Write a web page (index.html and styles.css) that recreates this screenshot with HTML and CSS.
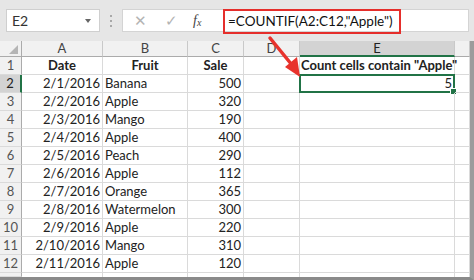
FILE: index.html
```html
<!DOCTYPE html>
<html lang="en">
<head>
  <meta charset="UTF-8" />
  <title>COUNTIF Apple</title>
  <link rel="stylesheet" href="styles.css">
</head>
<body>
  <div class="window">
    <!-- formula bar -->
    <div class="formula-bar">
      <div class="name-box"><span>E2</span><span class="caret"></span></div>
      <div class="grip"><i></i><i></i><i></i></div>
      <div class="formula-box">
        <div class="fx-buttons">
          <span class="btn-x">✕</span>
          <span class="btn-ok">✓</span>
          <span class="btn-fx">f<sub>x</sub></span>
        </div>
        <div class="formula-input">
          <span class="formula-text">=COUNTIF(A2:C12,"Apple")</span>
        </div>
      </div>
    </div>

    <!-- sheet -->
    <div class="sheet">
      <div class="hd corner"><span class="tri"></span></div>
      <div class="hd col">A</div>
      <div class="hd col">B</div>
      <div class="hd col">C</div>
      <div class="hd col">D</div>
      <div class="hd col active-col">E</div>
      <div class="hd col"></div>

      <div class="hd row">1</div>
      <div class="c bold center">Date</div>
      <div class="c bold center">Fruit</div>
      <div class="c bold center">Sale</div>
      <div class="c"></div>
      <div class="c bold label">Count cells contain "Apple"</div>
      <div class="c"></div>

      <div class="hd row active-row">2</div>
      <div class="c num">2/1/2016</div><div class="c">Banana</div><div class="c num">500</div>
      <div class="c"></div><div class="c num selected">5<span class="handle"></span></div><div class="c"></div>

      <div class="hd row">3</div>
      <div class="c num">2/2/2016</div><div class="c">Apple</div><div class="c num">320</div>
      <div class="c"></div><div class="c"></div><div class="c"></div>

      <div class="hd row">4</div>
      <div class="c num">2/3/2016</div><div class="c">Mango</div><div class="c num">190</div>
      <div class="c"></div><div class="c"></div><div class="c"></div>

      <div class="hd row">5</div>
      <div class="c num">2/4/2016</div><div class="c">Apple</div><div class="c num">400</div>
      <div class="c"></div><div class="c"></div><div class="c"></div>

      <div class="hd row">6</div>
      <div class="c num">2/5/2016</div><div class="c">Peach</div><div class="c num">290</div>
      <div class="c"></div><div class="c"></div><div class="c"></div>

      <div class="hd row">7</div>
      <div class="c num">2/6/2016</div><div class="c">Apple</div><div class="c num">112</div>
      <div class="c"></div><div class="c"></div><div class="c"></div>

      <div class="hd row">8</div>
      <div class="c num">2/7/2016</div><div class="c">Orange</div><div class="c num">365</div>
      <div class="c"></div><div class="c"></div><div class="c"></div>

      <div class="hd row">9</div>
      <div class="c num">2/8/2016</div><div class="c">Watermelon</div><div class="c num">300</div>
      <div class="c"></div><div class="c"></div><div class="c"></div>

      <div class="hd row">10</div>
      <div class="c num">2/9/2016</div><div class="c">Apple</div><div class="c num">220</div>
      <div class="c"></div><div class="c"></div><div class="c"></div>

      <div class="hd row">11</div>
      <div class="c num">2/10/2016</div><div class="c">Mango</div><div class="c num">310</div>
      <div class="c"></div><div class="c"></div><div class="c"></div>

      <div class="hd row">12</div>
      <div class="c num">2/11/2016</div><div class="c">Apple</div><div class="c num">120</div>
      <div class="c"></div><div class="c"></div><div class="c"></div>

      <div class="hd row cut"></div>
      <div class="c cut"></div><div class="c cut"></div><div class="c cut"></div>
      <div class="c cut"></div><div class="c cut"></div><div class="c cut"></div>
    </div>

    <!-- annotation arrow -->
    <svg class="arrow" width="474" height="280" viewBox="0 0 474 280">
      <line x1="270" y1="38" x2="292" y2="65" stroke="#e8322c" stroke-width="3.5" stroke-linecap="round" />
      <polygon points="300,77 285,67 297,57" fill="#e8322c" />
    </svg>
  </div>
</body>
</html>
```

FILE: styles.css
```css
body {
  margin: 0;
  font-family: Lato, "Liberation Sans", sans-serif;
  color: #222;
  background: #fff;
}

.window {
  position: relative;
  width: 474px;
  height: 280px;
  overflow: hidden;
}

/* formula bar */
.formula-bar {
  height: 41px;
  background: #e6e6e6;
  display: flex;
  align-items: flex-start;
  padding: 9px 5px 0 6px;
  box-sizing: border-box;
}

.name-box {
  width: 94px;
  height: 23px;
  background: #fff;
  border: 1px solid #cfcfcf;
  box-sizing: border-box;
  display: flex;
  align-items: center;
  justify-content: space-between;
  padding: 0 8px 0 5px;
  font-size: 14px;
  color: #333;
}

.caret {
  width: 0;
  height: 0;
  border-left: 3px solid transparent;
  border-right: 3px solid transparent;
  border-top: 4px solid #666;
}

.grip {
  width: 22px;
  height: 23px;
  display: flex;
  flex-direction: column;
  align-items: center;
  justify-content: center;
  gap: 3px;
}

.grip i {
  width: 2px;
  height: 2px;
  background: #a8a8a8;
}

.formula-box {
  flex: 1;
  height: 23px;
  background: #fff;
  border: 1px solid #d4d4d4;
  box-sizing: border-box;
  display: flex;
}

.fx-buttons {
  width: 100px;
  display: flex;
  align-items: center;
  font-size: 15px;
  color: #b4b4b4;
}

.btn-x { margin-left: 11px; }
.btn-ok { margin-left: 18px; }

.btn-fx {
  margin-left: 15px;
  font-family: "Liberation Serif", serif;
  font-style: italic;
  color: #444;
  font-size: 14px;
}

.btn-fx sub {
  font-size: 10px;
  vertical-align: -1px;
}

.formula-input {
  flex: 1;
  display: flex;
  align-items: stretch;
  margin-top: -1px;
}

.formula-text {
  width: 178px;
  height: 25px;
  border: 2px solid #e52e2b;
  box-sizing: border-box;
  padding-left: 3px;
  font-size: 13.5px;
  line-height: 21px;
  color: #111;
  white-space: nowrap;
}

/* sheet grid */
.sheet {
  display: grid;
  grid-template-columns: 22px 81px 85px 56px 56px 155px 15px;
  grid-template-rows: 16px repeat(12, 18px) 4px;
  border-right: 4px solid #9c9c9c;
  border-bottom: 3px solid #8a8a8a;
  width: 474px;
  box-sizing: border-box;
  font-size: 13px;
}

.c {
  border-right: 1px solid #dadada;
  border-bottom: 1px solid #dadada;
  padding: 0 2px;
  line-height: 17px;
  white-space: nowrap;
  overflow: visible;
  position: relative;
}

.c.num { text-align: right; }
.c.center { text-align: center; }
.c.bold { font-weight: bold; }
.c.label { padding-left: 1px; }

.c.selected {
  border: 2px solid #217346;
  line-height: 14px;
  margin: -1px 0 0 -1px;
  padding-right: 1px;
}

.handle {
  position: absolute;
  right: -4px;
  bottom: -4px;
  width: 5px;
  height: 5px;
  background: #217346;
  border: 1px solid #fff;
}

.hd {
  background: #f1f1f1;
  color: #444;
  font-size: 13px;
  text-align: center;
  line-height: 15px;
}

.hd.col {
  border-right: 1px solid #c9c9c9;
  border-bottom: 1px solid #ababab;
}

.hd.row {
  border-right: 1px solid #ababab;
  border-bottom: 1px solid #dadada;
  line-height: 17px;
  color: #555;
}

.hd.corner {
  border-right: 1px solid #ababab;
  border-bottom: 1px solid #ababab;
  position: relative;
}

.tri {
  position: absolute;
  right: 3px;
  bottom: 2px;
  width: 0;
  height: 0;
  border-left: 9px solid transparent;
  border-bottom: 9px solid #b5b5b5;
}

.hd.active-col {
  background: #d3d3d3;
  color: #222;
  border-bottom: 2px solid #217346;
}

.hd.active-row {
  background: #d3d3d3;
  color: #222;
  border-right: 2px solid #217346;
}

.cut {
  overflow: hidden;
  border-bottom: none;
}

.arrow {
  position: absolute;
  left: 0;
  top: 0;
  pointer-events: none;
}
```
